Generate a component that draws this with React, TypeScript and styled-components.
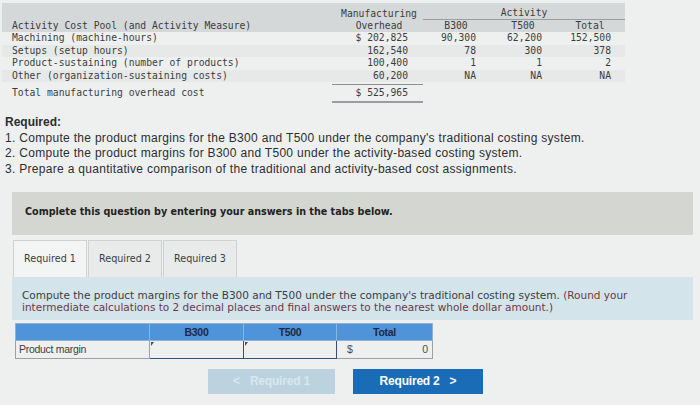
import React from "react";
import styled, { createGlobalStyle } from "styled-components";

const Global = createGlobalStyle`
  html, body { margin: 0; padding: 0; }
  body { background: #eef0ef; width: 700px; height: 405px; overflow: hidden; }
`;

const Page = styled.div`
  width: 700px;
  height: 405px;
  padding-top: 3px;
  box-sizing: border-box;
`;

const DataTable = styled.table`
  margin-left: 2px;
  border-collapse: collapse;
  font-family: "DejaVu Sans Mono", "Liberation Mono", monospace;
  font-size: 9.7px;
  color: #3a3d40;
  td { padding: 0; height: 12.5px; line-height: 12.5px; white-space: nowrap; }
`;

const HeadRow = styled.tr<{ $tall?: boolean }>`
  background: #d5d8d9;
  td {
    height: ${(p) => (p.$tall ? "16px" : "12px")};
    line-height: ${(p) => (p.$tall ? "13px" : "12px")};
    vertical-align: bottom;
  }
`;

const BodyRow = styled.tr<{ $shade?: boolean }>`
  background: ${(p) => (p.$shade ? "#e7e9e9" : "transparent")};
`;

const LabelCell = styled.td`
  width: 320px;
  padding-left: 10px !important;
`;

const OhCell = styled.td<{ $top?: boolean; $bottom?: boolean; $center?: boolean }>`
  width: 76px;
  text-align: ${(p) => (p.$center ? "center" : "right")};
  padding-right: ${(p) => (p.$center ? "0" : "15px")} !important;
  padding-left: ${(p) => (p.$center ? "3px" : "0")} !important;
  border-top: ${(p) => (p.$top ? "1px solid #8c9094" : "none")};
  border-bottom: ${(p) => (p.$bottom ? "2px solid #9a9ea2" : "none")};
`;

const NumCell = styled.td<{ $w: number; $pr: number }>`
  width: ${(p) => p.$w - p.$pr}px;
  padding-right: ${(p) => p.$pr}px !important;
  text-align: right;
`;

const HeadCell = styled.td<{ $w: number; $pl: number }>`
  width: ${(p) => p.$w - p.$pl}px;
  padding-left: ${(p) => p.$pl}px !important;
  text-align: center;
`;

const ActivityHead = styled.td`
  text-align: center;
  border-bottom: 1px solid #9a9ea2;
`;

const Spacer = styled.tr`
  td { height: 2px !important; line-height: 2px !important; }
`;

const TotalRow = styled.tr`
  td { height: 16px; line-height: 16px; }
`;

const Required = styled.div`
  margin-top: 11px;
  padding-left: 5px;
  font-family: "Liberation Sans", Arial, sans-serif;
  font-size: 12px;
  letter-spacing: 0.3px;
  color: #2b2e31;
  line-height: 15.8px;
`;

const ReqTitle = styled.div`
  font-weight: bold;
  letter-spacing: 0;
  line-height: 16.5px;
`;

const GreyBox = styled.div`
  margin: 14px 7px 0 12px;
  height: 43px;
  background: #d4d7d1;
  display: flex;
  align-items: center;
  padding-left: 13px;
  padding-bottom: 4px;
  box-sizing: border-box;
  font-family: "DejaVu Sans", Verdana, sans-serif;
  font-weight: bold;
  font-size: 9.6px;
  color: #222;
`;

const Tabs = styled.div`
  display: flex;
  margin: 5px 0 0 13px;
  gap: 1px;
`;

const Tab = styled.div<{ $active?: boolean }>`
  width: 74px;
  height: 37px;
  box-sizing: border-box;
  border: 1px solid #cfd2d2;
  border-bottom: none;
  background: ${(p) => (p.$active ? "#f3f4f4" : "#e9ebeb")};
  display: flex;
  align-items: center;
  justify-content: center;
  font-family: "DejaVu Sans", Verdana, sans-serif;
  font-size: 9.6px;
  color: #3a3d40;
`;

const InfoBox = styled.div`
  margin: 0 7px 0 12px;
  height: 43px;
  box-sizing: border-box;
  background: #d3e5ea;
  padding: 12px 10px 0 10px;
  font-family: "DejaVu Sans", Verdana, sans-serif;
  font-size: 10.5px;
  line-height: 12px;
  color: #3a3d44;
`;

const Accent = styled.span`
  color: #6e3848;
`;

const AnswerTable = styled.table`
  margin: 3px 0 0 15px;
  border-collapse: collapse;
  font-family: "Liberation Sans Narrow", "Liberation Sans", Arial, sans-serif;
  font-size: 10.5px;
  td, th { padding: 0; }
`;

const AHead = styled.th<{ $w: number }>`
  width: ${(p) => p.$w}px;
  height: 16px;
  background: #4f93d9;
  border: 1px solid #8fb3d8;
  font-weight: bold;
  color: #1c2a44;
  text-align: center;
  letter-spacing: -0.3px;
`;

const ALabel = styled.td`
  height: 17px;
  border: 1px solid #9aa0a4;
  background: #eef0ef;
  padding-left: 3px !important;
  color: #3a3d40;
  letter-spacing: -0.3px;
`;

const AInput = styled.td`
  height: 17px;
  border: 1.5px solid #34507a;
  background: #eef0ef;
  position: relative;
`;

const Flag = styled.span`
  position: absolute;
  left: 1px;
  top: 1px;
  width: 0;
  height: 0;
  border-top: 4px solid #34507a;
  border-right: 3px solid transparent;
`;

const ATotal = styled.td`
  height: 17px;
  border: 1px solid #9aa0a4;
  background: #eef0ef;
  color: #4a4d50;
  padding: 0 4px 0 10px !important;
`;

const TotalInner = styled.div`
  display: flex;
  justify-content: space-between;
`;

const Buttons = styled.div`
  display: flex;
  margin: 10px 0 0 208px;
  gap: 18px;
`;

const NavButton = styled.div<{ $primary?: boolean }>`
  width: ${(p) => (p.$primary ? 130 : 127)}px;
  height: 25px;
  background: ${(p) => (p.$primary ? "#1b6cb6" : "#bcd3df")};
  color: ${(p) => (p.$primary ? "#ffffff" : "#d9e7ee")};
  display: flex;
  align-items: center;
  justify-content: center;
  gap: 10px;
  font-family: "Liberation Sans Narrow", "Liberation Sans", Arial, sans-serif;
  font-weight: bold;
  font-size: 12px;
  letter-spacing: -0.2px;
`;

const Chevron = styled.span`
  font-weight: bold;
  font-size: 12px;
`;

const rows = [
  ["Machining (machine-hours)", "$ 202,825", "90,300", "62,200", "152,500"],
  ["Setups (setup hours)", "162,540", "78", "300", "378"],
  ["Product-sustaining (number of products)", "100,400", "1", "1", "2"],
  ["Other (organization-sustaining costs)", "60,200", "NA", "NA", "NA"],
];

export default function App() {
  return (
    <Page>
      <Global />
      <DataTable>
        <tbody>
          <HeadRow $tall>
            <LabelCell />
            <OhCell $center>Manufacturing</OhCell>
            <ActivityHead colSpan={3}>Activity</ActivityHead>
          </HeadRow>
          <HeadRow>
            <LabelCell>Activity Cost Pool (and Activity Measure)</LabelCell>
            <OhCell $center>Overhead</OhCell>
            <HeadCell $w={60} $pl={6}>B300</HeadCell>
            <HeadCell $w={66} $pl={14}>T500</HeadCell>
            <HeadCell $w={76} $pl={6}>Total</HeadCell>
          </HeadRow>
          {rows.map((r, i) => (
            <BodyRow key={r[0]} $shade={i % 2 === 1}>
              <LabelCell>{r[0]}</LabelCell>
              <OhCell>{r[1]}</OhCell>
              <NumCell $w={60} $pr={7}>{r[2]}</NumCell>
              <NumCell $w={66} $pr={7}>{r[3]}</NumCell>
              <NumCell $w={76} $pr={14}>{r[4]}</NumCell>
            </BodyRow>
          ))}
          <Spacer>
            <td />
            <OhCell />
            <td />
            <td />
            <td />
          </Spacer>
          <TotalRow>
            <LabelCell>Total manufacturing overhead cost</LabelCell>
            <OhCell $top $bottom>$ 525,965</OhCell>
            <td />
            <td />
            <td />
          </TotalRow>
        </tbody>
      </DataTable>

      <Required>
        <ReqTitle>Required:</ReqTitle>
        <div>1. Compute the product margins for the B300 and T500 under the company's traditional costing system.</div>
        <div>2. Compute the product margins for B300 and T500 under the activity-based costing system.</div>
        <div>3. Prepare a quantitative comparison of the traditional and activity-based cost assignments.</div>
      </Required>

      <GreyBox>Complete this question by entering your answers in the tabs below.</GreyBox>

      <Tabs>
        <Tab $active>Required 1</Tab>
        <Tab>Required 2</Tab>
        <Tab>Required 3</Tab>
      </Tabs>

      <InfoBox>
        Compute the product margins for the B300 and T500 under the company's traditional costing system.{" "}
        <Accent>(Round your intermediate calculations to 2 decimal places and final answers to the nearest whole dollar amount.)</Accent>
      </InfoBox>

      <AnswerTable>
        <thead>
          <tr>
            <AHead $w={133} />
            <AHead $w={93}>B300</AHead>
            <AHead $w={92}>T500</AHead>
            <AHead $w={95}>Total</AHead>
          </tr>
        </thead>
        <tbody>
          <tr>
            <ALabel>Product margin</ALabel>
            <AInput><Flag /></AInput>
            <AInput><Flag /></AInput>
            <ATotal>
              <TotalInner>
                <span>$</span>
                <span>0</span>
              </TotalInner>
            </ATotal>
          </tr>
        </tbody>
      </AnswerTable>

      <Buttons>
        <NavButton>
          <Chevron>&lt;</Chevron>
          <span>Required 1</span>
        </NavButton>
        <NavButton $primary>
          <span>Required 2</span>
          <Chevron>&gt;</Chevron>
        </NavButton>
      </Buttons>
    </Page>
  );
}
